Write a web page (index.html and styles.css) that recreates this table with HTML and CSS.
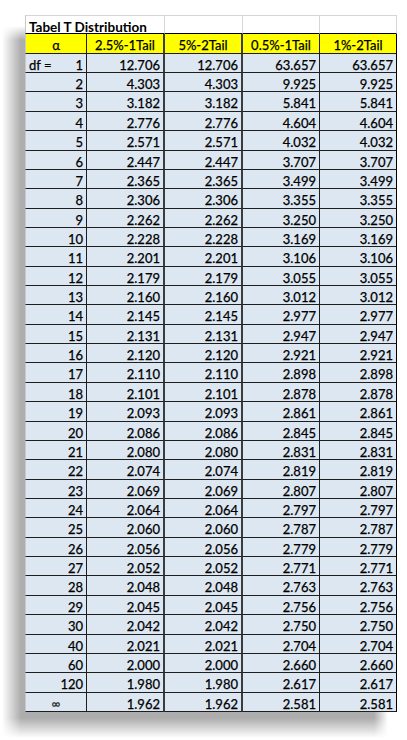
FILE: index.html
```html
<!DOCTYPE html>
<html>
<head>
<meta charset="utf-8">
<link rel="stylesheet" href="styles.css">
</head>
<body>
<div class="sheet">
  <div class="cell title">Tabel T Distribution</div>
  <div class="cell blank"></div>
  <div class="cell blank"></div>
  <div class="cell blank"></div>

  <div class="cell hd c1">α</div>
  <div class="cell hd c2">2.5%-1Tail</div>
  <div class="cell hd c3">5%-2Tail</div>
  <div class="cell hd c4">0.5%-1Tail</div>
  <div class="cell hd c5">1%-2Tail</div>

  <div class="cell c1 dflabel"><span>df =</span><span>1</span></div><div class="cell c2">12.706</div><div class="cell c3">12.706</div><div class="cell c4">63.657</div><div class="cell c5">63.657</div>
  <div class="cell c1">2</div><div class="cell c2">4.303</div><div class="cell c3">4.303</div><div class="cell c4">9.925</div><div class="cell c5">9.925</div>
  <div class="cell c1">3</div><div class="cell c2">3.182</div><div class="cell c3">3.182</div><div class="cell c4">5.841</div><div class="cell c5">5.841</div>
  <div class="cell c1">4</div><div class="cell c2">2.776</div><div class="cell c3">2.776</div><div class="cell c4">4.604</div><div class="cell c5">4.604</div>
  <div class="cell c1">5</div><div class="cell c2">2.571</div><div class="cell c3">2.571</div><div class="cell c4">4.032</div><div class="cell c5">4.032</div>
  <div class="cell c1">6</div><div class="cell c2">2.447</div><div class="cell c3">2.447</div><div class="cell c4">3.707</div><div class="cell c5">3.707</div>
  <div class="cell c1">7</div><div class="cell c2">2.365</div><div class="cell c3">2.365</div><div class="cell c4">3.499</div><div class="cell c5">3.499</div>
  <div class="cell c1">8</div><div class="cell c2">2.306</div><div class="cell c3">2.306</div><div class="cell c4">3.355</div><div class="cell c5">3.355</div>
  <div class="cell c1">9</div><div class="cell c2">2.262</div><div class="cell c3">2.262</div><div class="cell c4">3.250</div><div class="cell c5">3.250</div>
  <div class="cell c1">10</div><div class="cell c2">2.228</div><div class="cell c3">2.228</div><div class="cell c4">3.169</div><div class="cell c5">3.169</div>
  <div class="cell c1">11</div><div class="cell c2">2.201</div><div class="cell c3">2.201</div><div class="cell c4">3.106</div><div class="cell c5">3.106</div>
  <div class="cell c1">12</div><div class="cell c2">2.179</div><div class="cell c3">2.179</div><div class="cell c4">3.055</div><div class="cell c5">3.055</div>
  <div class="cell c1">13</div><div class="cell c2">2.160</div><div class="cell c3">2.160</div><div class="cell c4">3.012</div><div class="cell c5">3.012</div>
  <div class="cell c1">14</div><div class="cell c2">2.145</div><div class="cell c3">2.145</div><div class="cell c4">2.977</div><div class="cell c5">2.977</div>
  <div class="cell c1">15</div><div class="cell c2">2.131</div><div class="cell c3">2.131</div><div class="cell c4">2.947</div><div class="cell c5">2.947</div>
  <div class="cell c1">16</div><div class="cell c2">2.120</div><div class="cell c3">2.120</div><div class="cell c4">2.921</div><div class="cell c5">2.921</div>
  <div class="cell c1">17</div><div class="cell c2">2.110</div><div class="cell c3">2.110</div><div class="cell c4">2.898</div><div class="cell c5">2.898</div>
  <div class="cell c1">18</div><div class="cell c2">2.101</div><div class="cell c3">2.101</div><div class="cell c4">2.878</div><div class="cell c5">2.878</div>
  <div class="cell c1">19</div><div class="cell c2">2.093</div><div class="cell c3">2.093</div><div class="cell c4">2.861</div><div class="cell c5">2.861</div>
  <div class="cell c1">20</div><div class="cell c2">2.086</div><div class="cell c3">2.086</div><div class="cell c4">2.845</div><div class="cell c5">2.845</div>
  <div class="cell c1">21</div><div class="cell c2">2.080</div><div class="cell c3">2.080</div><div class="cell c4">2.831</div><div class="cell c5">2.831</div>
  <div class="cell c1">22</div><div class="cell c2">2.074</div><div class="cell c3">2.074</div><div class="cell c4">2.819</div><div class="cell c5">2.819</div>
  <div class="cell c1">23</div><div class="cell c2">2.069</div><div class="cell c3">2.069</div><div class="cell c4">2.807</div><div class="cell c5">2.807</div>
  <div class="cell c1">24</div><div class="cell c2">2.064</div><div class="cell c3">2.064</div><div class="cell c4">2.797</div><div class="cell c5">2.797</div>
  <div class="cell c1">25</div><div class="cell c2">2.060</div><div class="cell c3">2.060</div><div class="cell c4">2.787</div><div class="cell c5">2.787</div>
  <div class="cell c1">26</div><div class="cell c2">2.056</div><div class="cell c3">2.056</div><div class="cell c4">2.779</div><div class="cell c5">2.779</div>
  <div class="cell c1">27</div><div class="cell c2">2.052</div><div class="cell c3">2.052</div><div class="cell c4">2.771</div><div class="cell c5">2.771</div>
  <div class="cell c1">28</div><div class="cell c2">2.048</div><div class="cell c3">2.048</div><div class="cell c4">2.763</div><div class="cell c5">2.763</div>
  <div class="cell c1">29</div><div class="cell c2">2.045</div><div class="cell c3">2.045</div><div class="cell c4">2.756</div><div class="cell c5">2.756</div>
  <div class="cell c1">30</div><div class="cell c2">2.042</div><div class="cell c3">2.042</div><div class="cell c4">2.750</div><div class="cell c5">2.750</div>
  <div class="cell c1">40</div><div class="cell c2">2.021</div><div class="cell c3">2.021</div><div class="cell c4">2.704</div><div class="cell c5">2.704</div>
  <div class="cell c1">60</div><div class="cell c2">2.000</div><div class="cell c3">2.000</div><div class="cell c4">2.660</div><div class="cell c5">2.660</div>
  <div class="cell c1">120</div><div class="cell c2">1.980</div><div class="cell c3">1.980</div><div class="cell c4">2.617</div><div class="cell c5">2.617</div>
  <div class="cell c1 inf">∞</div><div class="cell c2">1.962</div><div class="cell c3">1.962</div><div class="cell c4">2.581</div><div class="cell c5">2.581</div>
</div>
</body>
</html>
```

FILE: styles.css
```css
html {
  background: #ffffff;
}

body {
  margin: 0;
  min-height: 740px;
  padding: 15px 0 0 25px;
  box-sizing: border-box;
  font-family: Lato, "Open Sans", "Liberation Sans", sans-serif;
  font-size: 13px;
  color: #000000;
}

.sheet {
  position: relative;
  z-index: 0;
  display: grid;
  grid-template-columns: 62px 78px 78px 77px 77px;
  grid-auto-rows: 19.36px;
  width: 372px;
}

/* soft drop shadow, down and to the left */
.sheet::before {
  content: "";
  position: absolute;
  left: -23px;
  top: 11px;
  right: 9px;
  bottom: -26px;
  z-index: -1;
  background: #adadad;
  -webkit-mask-image:
    linear-gradient(to right, transparent 0, #000 19px, #000 calc(100% - 14px), transparent 100%),
    linear-gradient(to bottom, transparent 0, #000 14px, #000 calc(100% - 20px), transparent 100%);
  -webkit-mask-composite: source-in;
  mask-image:
    linear-gradient(to right, transparent 0, #000 19px, #000 calc(100% - 14px), transparent 100%),
    linear-gradient(to bottom, transparent 0, #000 14px, #000 calc(100% - 20px), transparent 100%);
  mask-composite: intersect;
}

.cell {
  box-sizing: border-box;
  padding: 3px 3px 0 3px;
  line-height: 16px;
  white-space: nowrap;
  text-align: right;
  background: #dde7f2;
  border-bottom: 1px solid #1e1e1e;
  border-right: 1px solid #1e1e1e;
  -webkit-text-stroke: 0.25px #000000;
}

.c1 {
  border-left: 1px solid #c9c9c9;
}

.c2, .c3 {
  border-right: 2px solid #3c3c3c;
}

.c5 {
  border-right: 1.5px solid #000000;
}

.title {
  grid-column: span 2;
  background: #ffffff;
  font-weight: 700;
  font-size: 13.5px;
  text-align: left;
  padding-left: 3px;
  border-top: 1px solid #d6d6d6;
  border-left: 1px solid #c9c9c9;
  border-right: 1px solid #d6d6d6;
  border-bottom: 1px solid #000000;
  -webkit-text-stroke: 0;
}

.blank {
  background: #ffffff;
  border-top: 1px solid #d6d6d6;
  border-right: 1px solid #d6d6d6;
  border-bottom: 1px solid #000000;
}

.hd {
  background: #ffff00;
  text-align: center;
}

.dflabel {
  display: flex;
  justify-content: space-between;
}

.inf {
  text-align: center;
  font-size: 12px;
  font-weight: 700;
  color: #333333;
  -webkit-text-stroke: 0;
}
```
